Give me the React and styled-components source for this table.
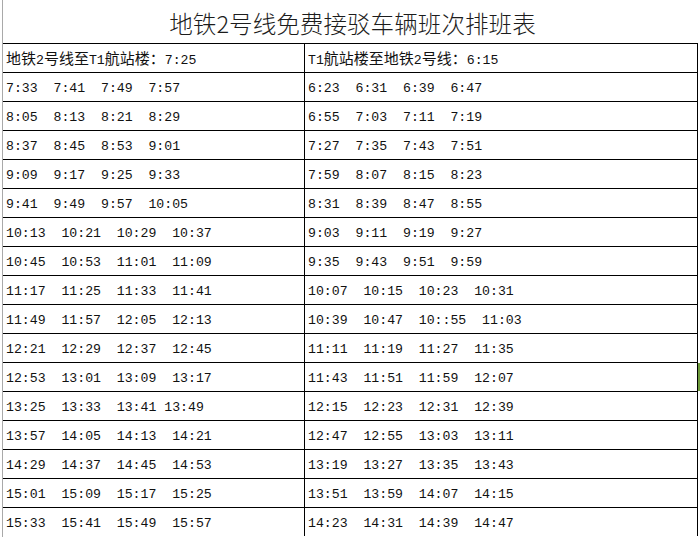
import React from 'react'
import styled, { createGlobalStyle } from 'styled-components'

const GlobalStyle = createGlobalStyle`
  html, body {
    margin: 0;
    padding: 0;
    background: #ffffff;
  }
`;

const Page = styled.div`
  width: 700px;
  height: 537px;
  overflow: hidden;
  padding-left: 2px;
  box-sizing: border-box;
  background: #ffffff;
`;

const Sheet = styled.div`
  height: 100%;
  border-left: 1px solid #a9a9a9;
  display: flex;
  flex-direction: column;
`;

const Title = styled.div`
  height: 43px;
  flex: none;
  display: flex;
  align-items: center;
  justify-content: center;
  padding: 2px 0 0 2px;
  font-family: "Noto Sans CJK SC", sans-serif;
  font-weight: 300;
  font-size: 23.6px;
  color: #1c1c1c;
  box-sizing: border-box;
`;

const Table = styled.div`
  width: 695px;
  display: flex;
  flex-direction: column;
`;

const Row = styled.div`
  position: relative;
  display: grid;
  grid-template-columns: 302px 393px;
  height: 29px;
  flex: none;
  border-top: 1px solid #000;
  box-sizing: border-box;
`;

const Cell = styled.div`
  display: flex;
  align-items: center;
  padding: 2px 0 0 3px;
  box-sizing: border-box;
  border-right: 1px solid #000;
  font-family: "Liberation Mono", "Noto Sans CJK SC", monospace;
  font-size: 13.2px;
  color: #111;
  white-space: pre;
`;

const Label = styled.span`
  line-height: 1;
`;

const Cn = styled.span`
  font-family: "Noto Sans CJK SC", sans-serif;
  font-size: 15px;
`;

const Marker = styled.div`
  position: absolute;
  right: -2px;
  top: 0;
  bottom: 0;
  width: 2px;
  background: #6e9a3c;
`;

const rows = [
  ['7:33  7:41  7:49  7:57', '6:23  6:31  6:39  6:47'],
  ['8:05  8:13  8:21  8:29', '6:55  7:03  7:11  7:19'],
  ['8:37  8:45  8:53  9:01', '7:27  7:35  7:43  7:51'],
  ['9:09  9:17  9:25  9:33', '7:59  8:07  8:15  8:23'],
  ['9:41  9:49  9:57  10:05', '8:31  8:39  8:47  8:55'],
  ['10:13  10:21  10:29  10:37', '9:03  9:11  9:19  9:27'],
  ['10:45  10:53  11:01  11:09', '9:35  9:43  9:51  9:59'],
  ['11:17  11:25  11:33  11:41', '10:07  10:15  10:23  10:31'],
  ['11:49  11:57  12:05  12:13', '10:39  10:47  10::55  11:03'],
  ['12:21  12:29  12:37  12:45', '11:11  11:19  11:27  11:35'],
  ['12:53  13:01  13:09  13:17', '11:43  11:51  11:59  12:07'],
  ['13:25  13:33  13:41 13:49', '12:15  12:23  12:31  12:39'],
  ['13:57  14:05  14:13  14:21', '12:47  12:55  13:03  13:11'],
  ['14:29  14:37  14:45  14:53', '13:19  13:27  13:35  13:43'],
  ['15:01  15:09  15:17  15:25', '13:51  13:59  14:07  14:15'],
  ['15:33  15:41  15:49  15:57', '14:23  14:31  14:39  14:47'],
];

function App() {
  return (
    <Page>
      <GlobalStyle />
      <Sheet>
        <Title>地铁2号线免费接驳车辆班次排班表</Title>
        <Table>
          <Row>
            <Cell>
              <Label>
                <Cn>地铁</Cn>2<Cn>号线至</Cn>T1<Cn>航站楼：</Cn>7:25
              </Label>
            </Cell>
            <Cell>
              <Label>
                T1<Cn>航站楼至地铁</Cn>2<Cn>号线：</Cn>6:15
              </Label>
            </Cell>
          </Row>
          {rows.map(([left, right], i) => (
            <Row key={i}>
              <Cell>{left}</Cell>
              <Cell>{right}</Cell>
              {i === 10 && <Marker />}
            </Row>
          ))}
        </Table>
      </Sheet>
    </Page>
  );
}

export default App;
